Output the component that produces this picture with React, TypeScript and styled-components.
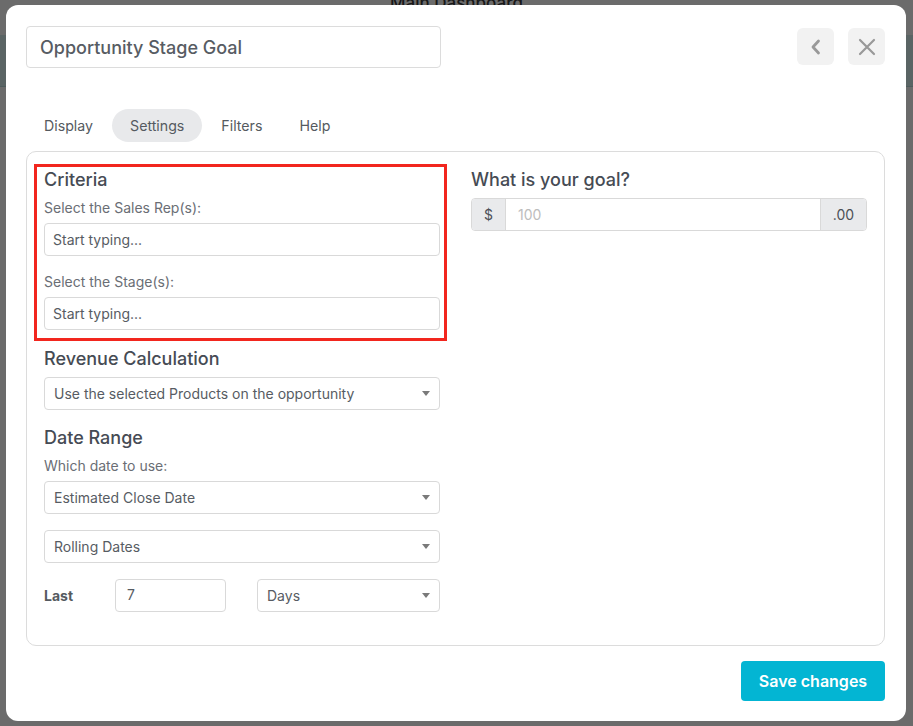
import React from 'react';
import styled, { createGlobalStyle } from 'styled-components';

const GlobalStyle = createGlobalStyle`
  * { box-sizing: border-box; }
  html, body { margin: 0; padding: 0; }
  body {
    font-family: Inter, 'Noto Sans', Arial, sans-serif;
    background: #ffffff;
  }
`;

const Screen = styled.div`
  position: relative;
  width: 100%;
  height: 100vh;
  overflow: hidden;
  background: #ffffff;
`;

/* dashboard sitting behind the modal */
const DashTitle = styled.div`
  margin-top: -7px;
  text-align: center;
  font-size: 17px;
  line-height: 20px;
  font-weight: 500;
  color: #3a3a3a;
`;

const DashBand = styled.div`
  margin-top: 22px;
  height: 52px;
  background: #d6eeee;
  border-bottom: 1px solid #b9dcdc;
`;

const Overlay = styled.div`
  position: absolute;
  inset: 0;
  background: rgba(0, 0, 0, 0.58);
  padding: 5px 7px 5px 6px;
`;

const Modal = styled.div`
  width: 900px;
  height: 716px;
  background: #ffffff;
  border-radius: 12px;
  padding: 21px 21px 20px 20px;
  display: flex;
  flex-direction: column;
`;

const Header = styled.div`
  display: flex;
  align-items: flex-start;
  justify-content: space-between;
`;

const TitleInput = styled.div`
  width: 415px;
  height: 42px;
  border: 1px solid #dcdcdc;
  border-radius: 4px;
  padding: 0 13px;
  display: flex;
  align-items: center;
  font-size: 18px;
  font-weight: 500;
  color: #575c63;
`;

const HeaderActions = styled.div`
  display: flex;
  gap: 14px;
  margin-top: 2px;
`;

const IconButton = styled.button`
  width: 37px;
  height: 37px;
  border: 0;
  border-radius: 6px;
  background: #f2f2f2;
  display: flex;
  align-items: center;
  justify-content: center;
  padding: 0;
  cursor: pointer;

  svg {
    display: block;
  }
`;

const Tabs = styled.div`
  display: flex;
  gap: 1px;
  margin-top: 41px;
`;

const Tab = styled.div<{ $active?: boolean }>`
  height: 33px;
  padding: 0 18px;
  border-radius: 17px;
  display: flex;
  align-items: center;
  font-size: 14.2px;
  color: #555a60;
  background: ${(p) => (p.$active ? '#e8e9eb' : 'transparent')};
`;

const Panel = styled.div`
  margin-top: 9px;
  border: 1px solid #dcdcdc;
  border-radius: 10px;
  padding: 17px 17px 33px 17px;
  display: grid;
  grid-template-columns: 396px 396px;
  column-gap: 31px;
  align-items: start;
`;

const Column = styled.div`
  display: flex;
  flex-direction: column;
`;

const Section = styled.div<{ $gap?: number }>`
  position: relative;
  display: flex;
  flex-direction: column;
  margin-bottom: ${(p) => p.$gap ?? 0}px;
`;

/* red outline marking the criteria block */
const Highlight = styled.div`
  position: absolute;
  left: -10px;
  right: -7px;
  top: -5px;
  bottom: -11px;
  border: 3px solid #f2261e;
  pointer-events: none;
`;

const SectionTitle = styled.div`
  font-size: 18px;
  line-height: 22px;
  font-weight: 500;
  color: #464b54;
  margin-bottom: 7px;
`;

const Label = styled.div`
  font-size: 14px;
  line-height: 20px;
  color: #6a6e75;
  margin-bottom: 5px;
`;

const FieldGroup = styled.div<{ $gap?: number }>`
  display: flex;
  flex-direction: column;
  margin-bottom: ${(p) => p.$gap ?? 0}px;
`;

const TextBox = styled.div<{ $muted?: boolean }>`
  height: 33px;
  flex-shrink: 0;
  border: 1px solid #d9d9d9;
  border-radius: 4px;
  padding: 0 8px;
  display: flex;
  align-items: center;
  font-size: 14px;
  color: ${(p) => (p.$muted ? '#b5b5b5' : '#575c63')};
`;

const Select = styled.div<{ $gap?: number }>`
  height: 33px;
  flex-shrink: 0;
  border: 1px solid #d9d9d9;
  border-radius: 4px;
  padding: 0 9px;
  display: flex;
  align-items: center;
  justify-content: space-between;
  font-size: 14px;
  color: #575c63;
  margin-bottom: ${(p) => p.$gap ?? 0}px;

  &::after {
    content: '';
    width: 0;
    height: 0;
    border-left: 4px solid transparent;
    border-right: 4px solid transparent;
    border-top: 5px solid #7a7a7a;
  }
`;

const LastRow = styled.div`
  display: flex;
  align-items: center;

  ${Select} {
    flex: 1;
  }
`;

const LastLabel = styled.div`
  width: 71px;
  font-size: 14px;
  font-weight: 700;
  color: #555a60;
`;

const NumberBox = styled(TextBox)`
  width: 111px;
  margin-right: 31px;
  align-items: flex-start;
  padding-top: 6px;
  padding-left: 11px;
`;

const InputGroup = styled.div`
  display: flex;
  height: 33px;
  border: 1px solid #d9d9d9;
  border-radius: 4px;
  overflow: hidden;
`;

const Addon = styled.div<{ $width: number }>`
  width: ${(p) => p.$width}px;
  background: #e9eaec;
  display: flex;
  align-items: center;
  justify-content: center;
  font-size: 14px;
  color: #4c5057;
`;

const GoalInput = styled.div`
  flex: 1;
  border-left: 1px solid #d9d9d9;
  border-right: 1px solid #d9d9d9;
  display: flex;
  align-items: center;
  padding: 0 12px;
  font-size: 14px;
  color: #bdbdbd;
`;

const Footer = styled.div`
  margin-top: 15px;
  display: flex;
  justify-content: flex-end;
`;

const SaveButton = styled.button`
  width: 144px;
  height: 40px;
  border: 0;
  border-radius: 4px;
  background: #03b5d3;
  color: #ffffff;
  font-family: inherit;
  font-size: 16px;
  font-weight: 600;
  cursor: pointer;
`;

const ChevronLeft = () => (
  <svg width="14" height="20" viewBox="0 0 14 20" fill="none">
    <path d="M9.5 4 L4 10 L9.5 16" stroke="#999999" strokeWidth="2.8" strokeLinecap="round" strokeLinejoin="round" />
  </svg>
);

const CloseX = () => (
  <svg width="20" height="20" viewBox="0 0 20 20" fill="none">
    <path d="M3 3 L17 17 M17 3 L3 17" stroke="#999999" strokeWidth="2.2" strokeLinecap="round" />
  </svg>
);

const App: React.FC = () => {
  return (
    <>
      <GlobalStyle />
      <Screen>
        <DashTitle>Main Dashboard</DashTitle>
        <DashBand />
        <Overlay>
          <Modal>
            <Header>
              <TitleInput>Opportunity Stage Goal</TitleInput>
              <HeaderActions>
                <IconButton aria-label="Back">
                  <ChevronLeft />
                </IconButton>
                <IconButton aria-label="Close">
                  <CloseX />
                </IconButton>
              </HeaderActions>
            </Header>

            <Tabs>
              <Tab>Display</Tab>
              <Tab $active>Settings</Tab>
              <Tab>Filters</Tab>
              <Tab>Help</Tab>
            </Tabs>

            <Panel>
              <Column>
                <Section $gap={18}>
                  <Highlight />
                  <SectionTitle>Criteria</SectionTitle>
                  <FieldGroup $gap={16}>
                    <Label>Select the Sales Rep(s):</Label>
                    <TextBox>Start typing...</TextBox>
                  </FieldGroup>
                  <FieldGroup>
                    <Label>Select the Stage(s):</Label>
                    <TextBox>Start typing...</TextBox>
                  </FieldGroup>
                </Section>

                <Section $gap={17}>
                  <SectionTitle>Revenue Calculation</SectionTitle>
                  <Select>Use the selected Products on the opportunity</Select>
                </Section>

                <Section>
                  <SectionTitle>Date Range</SectionTitle>
                  <Label>Which date to use:</Label>
                  <Select $gap={16}>Estimated Close Date</Select>
                  <Select $gap={16}>Rolling Dates</Select>
                  <LastRow>
                    <LastLabel>Last</LastLabel>
                    <NumberBox>7</NumberBox>
                    <Select>Days</Select>
                  </LastRow>
                </Section>
              </Column>

              <Column>
                <SectionTitle>What is your goal?</SectionTitle>
                <InputGroup>
                  <Addon $width={33}>$</Addon>
                  <GoalInput>100</GoalInput>
                  <Addon $width={45}>.00</Addon>
                </InputGroup>
              </Column>
            </Panel>

            <Footer>
              <SaveButton>Save changes</SaveButton>
            </Footer>
          </Modal>
        </Overlay>
      </Screen>
    </>
  );
};

export default App;
